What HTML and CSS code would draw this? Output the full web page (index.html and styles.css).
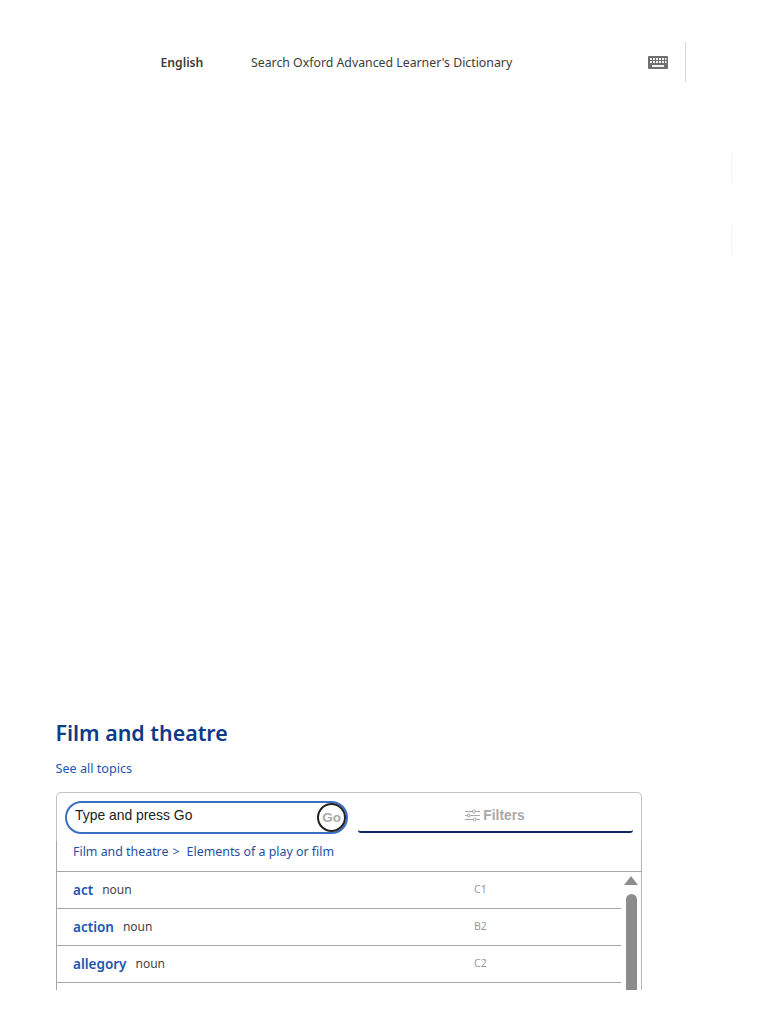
FILE: index.html
```html
<!DOCTYPE html>
<html lang="en">
<head>
<meta charset="utf-8">
<title>Film and theatre</title>
<link rel="stylesheet" href="styles.css">
</head>
<body>
<header class="searchbar">
  <span class="lang">English</span>
  <span class="placeholder">Search Oxford Advanced Learner's Dictionary</span>
  <svg class="keyboard" viewBox="0 0 20 13" width="20" height="13" aria-hidden="true">
    <rect width="20" height="13" rx="1" fill="#6f6f6f"/>
    <g fill="#f2f2f2">
      <rect x="2" y="2" width="2" height="2"/><rect x="5" y="2" width="2" height="2"/><rect x="8" y="2" width="2" height="2"/><rect x="11" y="2" width="2" height="2"/><rect x="14" y="2" width="2" height="2"/><rect x="17" y="2" width="1.5" height="2"/>
      <rect x="2" y="5" width="2" height="2"/><rect x="5" y="5" width="2" height="2"/><rect x="8" y="5" width="2" height="2"/><rect x="11" y="5" width="2" height="2"/><rect x="14" y="5" width="2" height="2"/><rect x="17" y="5" width="1.5" height="2"/>
      <rect x="4" y="9" width="12" height="2"/>
    </g>
  </svg>
  <span class="divider"></span>
</header>

<div class="edge-marks" aria-hidden="true">
  <span class="edge-line"></span>
  <span class="edge-line"></span>
</div>

<main class="topic">
  <h1 class="title">Film and theatre</h1>
  <a class="see-all" href="#">See all topics</a>

  <section class="panel">
    <div class="controls">
      <div class="search">
        <span class="search-text">Type and press Go</span>
        <span class="go">Go</span>
      </div>
      <div class="filters">
        <svg class="filter-icon" viewBox="0 0 15 13" width="15" height="13" aria-hidden="true">
          <g fill="none" stroke="#a9a9a9" stroke-width="1">
            <path d="M0 2.5h7M10 2.5h5M0 6.5h2M5 6.5h10M0 10.5h8M11 10.5h4"/>
            <rect x="7.5" y="1" width="2.5" height="3" rx="1"/>
            <rect x="2.5" y="5" width="2.5" height="3" rx="1"/>
            <rect x="8.5" y="9" width="2.5" height="3" rx="1"/>
          </g>
        </svg>
        <span>Filters</span>
      </div>
    </div>
    <div class="results">
      <div class="crumbs">
        <a href="#">Film and theatre</a><span class="sep">&gt;</span><a href="#">Elements of a play or film</a>
      </div>
      <div class="list-wrap">
        <ul class="words">
          <li class="word"><a class="head" href="#">act</a><span class="pos">noun</span><span class="level">C1</span></li>
          <li class="word"><a class="head" href="#">action</a><span class="pos">noun</span><span class="level">B2</span></li>
          <li class="word"><a class="head" href="#">allegory</a><span class="pos">noun</span><span class="level">C2</span></li>
        </ul>
        <div class="scrollbar">
          <span class="arrow"></span>
          <span class="thumb"></span>
        </div>
      </div>
    </div>
  </section>
</main>
</body>
</html>
```
FILE: styles.css
```css
* { box-sizing: border-box; }

html, body {
  margin: 0;
  padding: 0;
  background: #fff;
}

body {
  position: relative;
  height: 1024px;
  overflow: hidden;
  font-family: "Noto Sans", "Open Sans", sans-serif;
  color: #333;
}

a { text-decoration: none; }

.searchbar {
  display: flex;
  align-items: center;
  height: 40px;
  margin: 42px 0 0 160.5px;
  width: 525.5px;
}

.lang {
  width: 90.5px;
  font-size: 12.2px;
  font-weight: 600;
  color: #3c3c3c;
}

.placeholder {
  flex: 1;
  font-size: 12.3px;
  color: #3c3c3c;
}

.keyboard { margin-right: 17px; }

.divider {
  align-self: stretch;
  width: 1px;
  background: #d8d8d8;
}

.edge-marks {
  position: absolute;
  top: 153px;
  left: 731px;
  display: flex;
  flex-direction: column;
  gap: 42px;
}

.edge-line {
  display: block;
  width: 1px;
  height: 30px;
  background: #f3f3f3;
}

.topic {
  margin: 634px 0 0 56px;
  width: 586px;
}

.title {
  margin: 0 0 0 -0.5px;
  padding-top: 1px;
  font-size: 21.4px;
  line-height: 31px;
  font-weight: 600;
  color: #0e3a8a;
}

.see-all {
  display: block;
  margin: 11px 0 0 -0.5px;
  font-size: 12.6px;
  line-height: 20px;
  color: #1a56b0;
}

.panel {
  height: 198px;
  margin-top: 13px;
  overflow: hidden;
}

.controls {
  display: flex;
  gap: 10px;
  height: 49px;
  padding: 8px 8px 0 8px;
  border: 1px solid #c4c4c4;
  border-bottom: 0;
  border-radius: 5px 5px 0 0;
}

.search {
  display: flex;
  align-items: center;
  justify-content: space-between;
  width: 283px;
  height: 33px;
  padding: 0 0 0 8px;
  border: 2px solid #3a6fc4;
  border-radius: 17px;
  font-family: "Liberation Sans", Arial, sans-serif;
  font-size: 13.9px;
  color: #222;
}

.search-text { margin-bottom: 5px; }

.go {
  display: flex;
  align-items: center;
  justify-content: center;
  width: 29px;
  height: 29px;
  border: 2px solid #222;
  border-radius: 50%;
  font-weight: 700;
  font-size: 13.5px;
  color: #a9a9a9;
}

.filters {
  flex: 1;
  display: flex;
  align-items: center;
  justify-content: center;
  gap: 3px;
  height: 32px;
  padding: 0 1px 2px 0;
  border-bottom: 2px solid #12275e;
  border-radius: 0 0 3px 3px;
  font-family: "Liberation Sans", Arial, sans-serif;
  font-size: 13.8px;
  font-weight: 700;
  color: #a9a9a9;
}

.results {
  border-left: 1px solid #a6a6a6;
  border-right: 1px solid #b5b5b5;
}

.crumbs {
  display: flex;
  align-items: center;
  height: 31px;
  padding: 0 0 10px 16px;
  border-bottom: 1px solid #a6a6a6;
  font-size: 12.4px;
}

.crumbs a { color: #1f4f9f; }

.sep {
  margin: 0 7px 0 4px;
  color: #1f4f9f;
}

.list-wrap {
  display: flex;
  height: 120px;
}

.words {
  flex: 1;
  list-style: none;
  margin: 0;
  padding: 0;
}

.word {
  display: flex;
  align-items: center;
  height: 37px;
  padding: 0 0 1px 16px;
  border-bottom: 1px solid #a6a6a6;
}

.head {
  margin-right: 9px;
  font-size: 13.5px;
  font-weight: 600;
  color: #1a56b0;
}

.pos {
  font-size: 12px;
  color: #444;
}

.level {
  margin-left: auto;
  margin-bottom: 1px;
  width: 147px;
  font-size: 10.5px;
  color: #9a9a9a;
}

.scrollbar {
  display: flex;
  flex-direction: column;
  align-items: center;
  width: 20px;
  padding-top: 4px;
}

.arrow {
  width: 0;
  height: 0;
  border-left: 7px solid transparent;
  border-right: 7px solid transparent;
  border-bottom: 9px solid #8c8c8c;
}

.thumb {
  width: 11px;
  height: 120px;
  margin-top: 9px;
  border-radius: 6px 6px 0 0;
  background: #8c8c8c;
}
```
